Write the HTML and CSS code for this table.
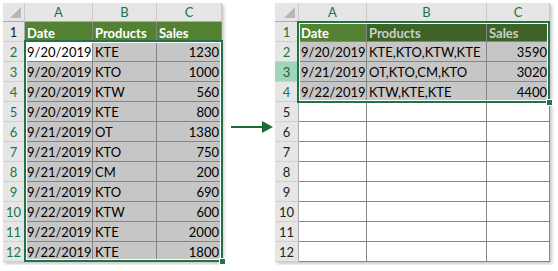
FILE: index.html
```
<!DOCTYPE html>
<html>
  <head>
    <meta charset="utf-8">
    <title>Combine rows by date</title>
    <link rel="stylesheet" href="styles.css">
  </head>
  <body>
  <div class="page">

    <div class="sheet">
      <div class="grid grid-left">
        <div class="corner"></div>
        <div class="colhead sel">A</div><div class="colhead sel">B</div><div class="colhead sel">C</div>

        <div class="rowhead">1</div>
        <div class="cell hdr">Date</div><div class="cell hdr">Products</div><div class="cell hdr">Sales</div>

        <div class="rowhead sel">2</div>
        <div class="cell">9/20/2019</div><div class="cell shade">KTE</div><div class="cell shade num">1230</div>
        <div class="rowhead sel">3</div>
        <div class="cell shade">9/20/2019</div><div class="cell shade">KTO</div><div class="cell shade num">1000</div>
        <div class="rowhead sel">4</div>
        <div class="cell shade">9/20/2019</div><div class="cell shade">KTW</div><div class="cell shade num">560</div>
        <div class="rowhead sel">5</div>
        <div class="cell shade">9/20/2019</div><div class="cell shade">KTE</div><div class="cell shade num">800</div>
        <div class="rowhead sel">6</div>
        <div class="cell shade">9/21/2019</div><div class="cell shade">OT</div><div class="cell shade num">1380</div>
        <div class="rowhead sel">7</div>
        <div class="cell shade">9/21/2019</div><div class="cell shade">KTO</div><div class="cell shade num">750</div>
        <div class="rowhead sel">8</div>
        <div class="cell shade">9/21/2019</div><div class="cell shade">CM</div><div class="cell shade num">200</div>
        <div class="rowhead sel">9</div>
        <div class="cell shade">9/21/2019</div><div class="cell shade">KTO</div><div class="cell shade num">690</div>
        <div class="rowhead sel">10</div>
        <div class="cell shade">9/22/2019</div><div class="cell shade">KTW</div><div class="cell shade num">600</div>
        <div class="rowhead sel">11</div>
        <div class="cell shade">9/22/2019</div><div class="cell shade">KTE</div><div class="cell shade num">2000</div>
        <div class="rowhead sel">12</div>
        <div class="cell shade">9/22/2019</div><div class="cell shade">KTE</div><div class="cell shade num">1800</div>
      </div>
      <div class="selection sel-left"><span class="handle"></span></div>
    </div>

    <div class="arrow">
      <svg width="42" height="14" viewBox="0 0 42 14">
        <path d="M0 7 H33" stroke="#1e6b35" stroke-width="2"/>
        <polygon points="31,1 42,7 31,13" fill="#1e6b35"/>
      </svg>
    </div>

    <div class="sheet">
      <div class="grid grid-right">
        <div class="corner"></div>
        <div class="colhead sel">A</div><div class="colhead sel">B</div><div class="colhead sel">C</div>

        <div class="rowhead sel">1</div>
        <div class="cell hdr">Date</div><div class="cell hdr dim">Products</div><div class="cell hdr dim">Sales</div>

        <div class="rowhead sel">2</div>
        <div class="cell shade">9/20/2019</div><div class="cell shade">KTE,KTO,KTW,KTE</div><div class="cell shade num">3590</div>
        <div class="rowhead sel active">3</div>
        <div class="cell shade">9/21/2019</div><div class="cell shade">OT,KTO,CM,KTO</div><div class="cell shade num">3020</div>
        <div class="rowhead sel">4</div>
        <div class="cell shade">9/22/2019</div><div class="cell shade">KTW,KTE,KTE</div><div class="cell shade num">4400</div>

        <div class="rowhead">5</div><div class="cell"></div><div class="cell"></div><div class="cell"></div>
        <div class="rowhead">6</div><div class="cell"></div><div class="cell"></div><div class="cell"></div>
        <div class="rowhead">7</div><div class="cell"></div><div class="cell"></div><div class="cell"></div>
        <div class="rowhead">8</div><div class="cell"></div><div class="cell"></div><div class="cell"></div>
        <div class="rowhead">9</div><div class="cell"></div><div class="cell"></div><div class="cell"></div>
        <div class="rowhead">10</div><div class="cell"></div><div class="cell"></div><div class="cell"></div>
        <div class="rowhead">11</div><div class="cell"></div><div class="cell"></div><div class="cell"></div>
        <div class="rowhead">12</div><div class="cell"></div><div class="cell"></div><div class="cell"></div>
      </div>
      <div class="selection sel-right"><span class="handle"></span></div>
    </div>

  </div>
  </body>
</html>
```

FILE: styles.css
```
body { margin: 0; background: #fff; font-family: Lato, "Liberation Sans", sans-serif; }
.page { display: flex; padding: 3px 0 0 3px; }

.sheet { position: relative; box-shadow: 2px 2px 3px rgba(0,0,0,0.22); align-self: flex-start; }
.grid { display: grid; grid-template-rows: 19px; grid-auto-rows: 20px; }
.grid-left { grid-template-columns: 22px 68px 64px 65px; }
.grid-right { grid-template-columns: 24px 68px 120px 63px; }

.grid > div { box-sizing: border-box; white-space: nowrap; overflow: hidden; }

.corner { position: relative; background: #e6e6e6; border-right: 1px solid #c9c9c9; border-bottom: 1px solid #ababab; }
.corner::after { content: ""; position: absolute; right: 3px; bottom: 3px; border-left: 11px solid transparent; border-bottom: 11px solid #b7b7b7; }

.colhead { background: #e6e6e6; color: #444; font-size: 13px; line-height: 18px; text-align: center;
  border-right: 1px solid #c9c9c9; border-bottom: 1px solid #ababab; }
.rowhead { background: #e6e6e6; color: #222; font-size: 13px; line-height: 20px; text-align: center;
  border-right: 1px solid #ababab; border-bottom: 1px solid #d0d0d0; }
.colhead.sel, .rowhead.sel { color: #217346; }
.rowhead.active { background: #a0d6b8; color: #1b5e39; }

.cell { font-size: 13px; line-height: 20px; color: #000; padding: 0 2px;
  border-right: 1px solid #858585; border-bottom: 1px solid #858585; }
.cell.num { text-align: right; padding-right: 2px; }
.cell.shade { background: #c6c6c6; }
.cell.hdr { background: #548235; color: #fff; font-weight: bold; padding-top: 1px; }
.cell.dim { background: #3f6228; color: #c9cfc3; }

.selection { position: absolute; box-sizing: border-box; border: 2px solid #217346; box-shadow: inset 0 0 0 1px #fff; }
.sel-left { left: 21px; top: 37px; width: 199px; height: 222px; }
.sel-right { left: 22px; top: 18px; width: 253px; height: 82px; }
.handle { position: absolute; right: -5px; bottom: -5px; width: 5px; height: 5px; background: #217346; border: 1px solid #fff; }

.arrow { width: 53px; height: 262px; display: flex; align-items: center; padding-bottom: 14px; box-sizing: border-box; }
.arrow svg { margin-left: 9px; }
```
